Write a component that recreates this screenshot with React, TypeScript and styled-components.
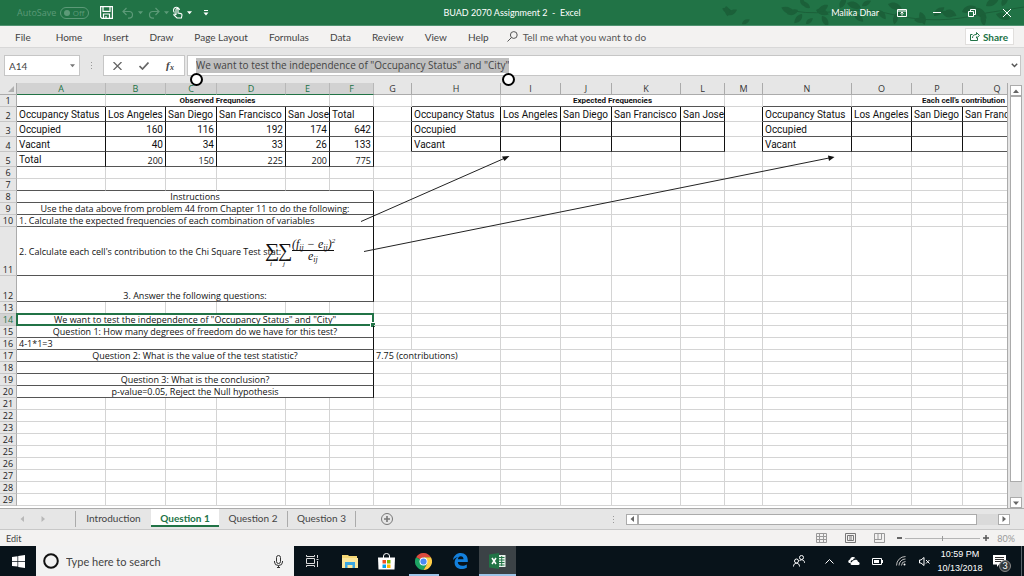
import React from "react";
import styled, { createGlobalStyle, css } from "styled-components";

const green = "#217346";
const ui = `Lato, "Open Sans", sans-serif`;
const headFont = `"Open Sans", "Noto Sans", sans-serif`;
const tableFont = `Roboto, "Open Sans", sans-serif`;

const GlobalStyle = createGlobalStyle`
  *, *::before, *::after { box-sizing: border-box; }
  body { margin: 0; font-family: ${ui}; color: #444; }
  button, input { font: inherit; color: inherit; margin: 0; padding: 0; border: 0; background: none; }
  svg { display: block; flex: none; }
`;

const Window = styled.div`
  display: flex;
  flex-direction: column;
  height: 100vh;
  overflow: hidden;
  background: #e6e6e6;
`;

/* ---------- title bar ---------- */

const TitleBar = styled.header`
  position: relative;
  display: grid;
  grid-template-columns: 1fr auto 1fr;
  align-items: center;
  height: 26px;
  flex: none;
  background: ${green};
  border-bottom: 1px solid #4f9270;
  color: #fff;
  font-size: 9px;
`;

const Foliage = styled.svg`
  position: absolute;
  top: 0;
  right: 0;
`;

const QuickAccess = styled.div`
  display: flex;
  align-items: center;
  padding-left: 17px;
`;

const AutoSave = styled.label`
  display: flex;
  align-items: center;
  gap: 4px;
  width: 83px;
  color: #5c9a78;
  font-family: ${headFont};
  font-size: 9px;
`;

const Toggle = styled.button`
  display: flex;
  align-items: center;
  justify-content: space-between;
  width: 29px;
  height: 12px;
  padding: 0 4px 0 3px;
  border: 1px solid #5c9a78;
  border-radius: 6px;
  color: #5c9a78;
  font-size: 8px;
  line-height: 9px;
  &::before {
    content: "";
    width: 6px;
    height: 6px;
    border-radius: 50%;
    background: #5c9a78;
  }
`;

const QuickButton = styled.button<{ $w: number; $dim?: boolean }>`
  display: flex;
  align-items: center;
  gap: 4px;
  width: ${(p) => p.$w}px;
  height: 20px;
  color: ${(p) => (p.$dim ? "#5c9a78" : "#fff")};
`;

const DocTitle = styled.h1`
  margin: 0;
  font-size: 9px;
  font-weight: 400;
  white-space: pre;
`;

const WindowControls = styled.div`
  position: relative;
  display: flex;
  align-items: center;
  justify-content: flex-end;
`;

const UserName = styled.span`
  margin-right: 5px;
`;

const WindowButton = styled.button`
  display: grid;
  place-items: center;
  width: 35px;
  height: 24px;
`;

/* ---------- ribbon ---------- */

const Ribbon = styled.nav`
  display: flex;
  align-items: center;
  height: 22px;
  flex: none;
  padding: 0 10px 0 5px;
  background: #f3f2f1;
  border-bottom: 1px solid #d8d8d8;
  font-size: 10px;
`;

const RibbonTab = styled.button<{ $first?: boolean }>`
  height: 22px;
  padding: 0 10px;
  margin-right: ${(p) => (p.$first ? 5 : 1)}px;
  white-space: nowrap;
`;

const TellMe = styled.button`
  display: flex;
  align-items: center;
  gap: 5px;
  margin-left: 7px;
  color: #555;
`;

const ShareButton = styled.button`
  display: flex;
  align-items: center;
  gap: 3px;
  height: 17px;
  margin-left: auto;
  padding: 0 5px 0 4px;
  background: #fff;
  border: 1px solid #e1dfdd;
  color: ${green};
  font-weight: 700;
`;

/* ---------- formula bar ---------- */

const FormulaBar = styled.div`
  position: relative;
  display: flex;
  align-items: center;
  height: 35px;
  flex: none;
  padding: 0 3px 0 4px;
`;

const barBox = css`
  height: 21px;
  background: #fff;
  border: 1px solid #c6c6c6;
`;

const NameBox = styled.div`
  ${barBox}
  display: flex;
  align-items: center;
  width: 76px;
  padding: 0 4px;
  & > input { width: 56px; font-size: 10px; flex: 1; }
`;

const Grip = styled.div`
  width: 23px;
  display: grid;
  place-items: center;
`;

const FormulaButtons = styled.div`
  ${barBox}
  display: flex;
  width: 82px;
  margin-right: 2px;
  & > button { flex: 1; display: grid; place-items: center; }
`;

const FormulaField = styled.div`
  ${barBox}
  display: flex;
  flex: 1;
  align-items: center;
  justify-content: space-between;
  padding: 0 2px 0 8px;
`;

const Selection = styled.div`
  position: relative;
  display: flex;
`;

const FormulaInput = styled.input`
  field-sizing: content;
  height: 15px;
  min-width: 60px;
  background: #c0c0c0;
  color: #444;
  font-family: ${headFont};
  font-size: 10px;
  line-height: 15px;
`;

const Handle = styled.span<{ $end?: boolean }>`
  position: absolute;
  top: 15px;
  ${(p) => (p.$end ? "right: -6px;" : "left: -6px;")}
  width: 13px;
  height: 13px;
  border: 2px solid #000;
  border-radius: 50%;
  background: #fff;
  z-index: 3;
`;

/* ---------- sheet ---------- */

const SheetArea = styled.main`
  display: flex;
  flex: 1;
  min-height: 0;
`;

const Grid = styled.div`
  position: relative;
  flex: 1;
  min-width: 0;
  overflow: hidden;
  background: #fff;
  border-right: 1px solid #ababab;
`;

const Table = styled.table`
  width: 100%;
  table-layout: fixed;
  border-spacing: 0;
  font-family: ${headFont};
  color: #111;
`;

const ColHead = styled.th<{ $on?: boolean }>`
  height: 12px;
  padding: 0;
  background: ${(p) => (p.$on ? "#d2d2d2" : "#e6e6e6")};
  border-right: 1px solid ${(p) => (p.$on ? "#b8b8b8" : "#ababab")};
  border-bottom: 1px solid ${(p) => (p.$on ? green : "#ababab")};
  color: ${(p) => (p.$on ? green : "#333")};
  font: 400 9px/11px ${headFont};
`;

const Corner = styled(ColHead)`
  & > svg { margin-left: 8px; }
`;

const RowHead = styled.th<{ $on?: boolean }>`
  padding: 0;
  vertical-align: bottom;
  background: ${(p) => (p.$on ? "#d2d2d2" : "#e6e6e6")};
  border-right: 1px solid #ababab;
  border-bottom: 1px solid #c6c6c6;
  color: ${(p) => (p.$on ? green : "#222")};
  font: 400 9px/11px ${headFont};
`;

type CellStyle = {
  $box?: boolean;
  $under?: boolean;
  $edge?: boolean;
  $align?: "left" | "right" | "center";
  $big?: boolean;
  $bold?: boolean;
  $middle?: boolean;
  $active?: boolean;
};

const Cell = styled.td<CellStyle>`
  position: relative;
  padding: 0 2px;
  white-space: nowrap;
  vertical-align: ${(p) => (p.$middle ? "middle" : "bottom")};
  border-right: 1px solid ${(p) => (p.$box || p.$edge ? "#111" : "#d4d4d4")};
  border-bottom: 1px solid ${(p) => (p.$box || p.$under ? "#555" : "#d4d4d4")};
  text-align: ${(p) => p.$align ?? "left"};
  font-family: ${(p) => (p.$big || p.$bold ? tableFont : "inherit")};
  font-size: ${(p) => (p.$bold ? 8 : p.$big ? 10 : 9)}px;
  line-height: ${(p) => (p.$big ? 12 : 11)}px;
  font-weight: ${(p) => (p.$bold ? 700 : 400)};
  ${(p) =>
    p.$active &&
    css`
      &::before {
        content: "";
        position: absolute;
        inset: -1px;
        border: 2px solid ${green};
      }
      &::after {
        content: "";
        position: absolute;
        right: -2px;
        bottom: -2px;
        width: 4px;
        height: 4px;
        background: ${green};
        outline: 1px solid #fff;
      }
    `}
`;

const Drawings = styled.svg`
  position: absolute;
  top: 0;
  left: 0;
  pointer-events: none;
`;

const VScroll = styled.div`
  display: flex;
  flex-direction: column;
  align-items: center;
  width: 16px;
  padding-top: 2px;
`;

const scrollBox = css`
  background: #fff;
  border: 1px solid #ababab;
`;

const ScrollButton = styled.button`
  ${scrollBox}
  display: grid;
  place-items: center;
  width: 12px;
  height: 11px;
  flex: none;
`;

const VThumb = styled.div`
  ${scrollBox}
  width: 12px;
  flex: 1;
`;

const VTrack = styled.div`
  width: 12px;
  height: 15px;
  flex: none;
  background: #dadada;
`;

/* ---------- sheet tabs & status ---------- */

const TabStrip = styled.div`
  display: flex;
  height: 22px;
  flex: none;
  border-top: 1px solid #ababab;
  border-bottom: 1px solid #c8c8c8;
  font-size: 10px;
`;

const TabArrows = styled.div`
  display: flex;
  align-items: center;
  gap: 15px;
  width: 75px;
  padding-left: 19px;
`;

const SheetTab = styled.button<{ $active?: boolean; $w: number }>`
  width: ${(p) => p.$w}px;
  height: 18px;
  white-space: nowrap;
  ${(p) =>
    p.$active &&
    css`
      background: #fff;
      color: ${green};
      font-weight: 700;
      border-bottom: 2px solid ${green};
      padding-top: 2px;
    `}
`;

const TabDivider = styled.span`
  width: 1px;
  height: 16px;
  margin-top: 2px;
  background: #ababab;
`;

const AddSheet = styled.button`
  display: grid;
  place-items: center;
  width: 62px;
  height: 20px;
`;

const HScroll = styled.div`
  display: flex;
  align-items: center;
  width: 41%;
  margin-left: auto;
  padding-right: 14px;
  height: 20px;
`;

const HGrip = styled(Grip)`
  width: 20px;
  margin-right: 2px;
  flex: none;
`;

const HThumb = styled.div`
  ${scrollBox}
  flex: 1;
  height: 11px;
`;

const HTrack = styled.div`
  width: 21px;
  height: 11px;
  background: #dadada;
`;

const StatusBar = styled.footer`
  display: flex;
  align-items: center;
  height: 16px;
  flex: none;
  padding: 0 9px 0 6px;
  background: #f3f2f1;
  font-size: 9px;
`;

const ViewButtons = styled.div`
  display: flex;
  gap: 18px;
  margin-left: auto;
  margin-right: 12px;
`;

const Zoom = styled.div`
  display: flex;
  align-items: center;
  gap: 3px;
  color: #999;
`;

const ZoomRange = styled.input`
  appearance: none;
  width: 75px;
  height: 7px;
  background: linear-gradient(#b5b5b5, #b5b5b5) center / 100% 1px no-repeat;
  &::-webkit-slider-thumb {
    appearance: none;
    width: 1px;
    height: 5px;
    background: #999;
  }
`;

const ZoomValue = styled.span`
  margin-left: 5px;
`;

/* ---------- taskbar ---------- */

const Taskbar = styled.div`
  display: flex;
  height: 30px;
  flex: none;
  background: #08131a;
  color: #fff;
`;

const TaskButton = styled.button<{ $active?: boolean; $open?: boolean }>`
  display: grid;
  place-items: center;
  width: 37px;
  height: 30px;
  background: ${(p) => (p.$active ? "#3b4246" : "transparent")};
  ${(p) => p.$active && "border-bottom: 2px solid #9cc4e8; padding-top: 2px;"}
  ${(p) =>
    p.$open &&
    "background: linear-gradient(#9cc4e8, #9cc4e8) center bottom / 30px 2px no-repeat;"}
`;

const StartButton = styled(TaskButton)`
  width: 36px;
`;

const SearchBox = styled.label`
  display: flex;
  align-items: center;
  width: 258px;
  padding: 0 11px 0 7px;
  background: #f2f2f2;
  color: #444;
  & > input { flex: 1; min-width: 0; margin-left: 7px; font-size: 11px; }
  & > input::placeholder { color: #444; opacity: 1; }
`;

const Tray = styled.div`
  display: flex;
  align-items: center;
  margin-left: auto;
`;

const TrayButton = styled.button<{ $w?: number }>`
  display: grid;
  place-items: center;
  width: ${(p) => p.$w ?? 24}px;
  height: 30px;
`;

const Clock = styled.button`
  width: 50px;
  font-family: "Liberation Sans", sans-serif;
  font-size: 9px;
  line-height: 14px;
  text-align: center;
`;

const Notifications = styled.button`
  position: relative;
  width: 36px;
  height: 30px;
  padding-left: 8px;
`;

const Badge = styled.span`
  position: absolute;
  left: 14px;
  top: 14px;
  width: 12px;
  height: 12px;
  border: 1px solid #888;
  border-radius: 50%;
  background: #333a3e;
  font-size: 9px;
  line-height: 10px;
  text-align: center;
`;

const DesktopEdge = styled.div`
  width: 3px;
  height: 30px;
  border-left: 1px solid #59636a;
`;

/* ---------- small drawings ---------- */

const Caret = ({ size = 5, color = "currentColor" }: { size?: number; color?: string }) => (
  <svg width={size} height="4" viewBox="0 0 6 4">
    <path d="M0 0h6L3 3.6z" fill={color} />
  </svg>
);

const Arrow = ({ dir, color = "#666" }: { dir: "up" | "down" | "left" | "right"; color?: string }) => {
  const d = {
    up: "M0 5h6L3 1.5z",
    down: "M0 1.5h6L3 5z",
    left: "M5 0v6L1.5 3z",
    right: "M1.5 0v6L5 3z",
  }[dir];
  return (
    <svg width="6" height="6" viewBox="0 0 6 6">
      <path d={d} fill={color} />
    </svg>
  );
};

const Dots = () => (
  <svg width="2" height="9" viewBox="0 0 2 9" fill="#999">
    <path d="M0 1h1v1H0zM0 4h1v1H0zM0 7h1v1H0z" />
  </svg>
);

const UndoIcon = ({ flip }: { flip?: boolean }) => (
  <svg width="12" height="12" viewBox="0 0 12 12" fill="none" stroke="currentColor" strokeWidth="1.2">
    <g transform={flip ? "matrix(-1 0 0 1 12 0)" : undefined}>
      <path d="M4.5 1 1 4.5 4.5 8M1 4.5h6.2a3.3 3.3 0 0 1 0 6.6H6" />
    </g>
  </svg>
);

const Leaf = ({ x, y, r, s = 1 }: { x: number; y: number; r: number; s?: number }) => (
  <path d="M0 0C4 -5 10 -5 15 0C10 4 4 4 0 0z" transform={`translate(${x} ${y}) rotate(${r}) scale(${s})`} />
);

const leaves: [number, number, number, number][] = [
  [112, 12, 200, 0.9], [116, 10, 160, 0.8], [120, 14, 130, 0.8], [128, 8, 220, 0.7], [122, 6, 250, 0.6],
  [134, 10, 20, 0.9], [140, 16, 60, 0.8], [146, 5, 150, 0.8], [150, 12, 10, 0.9], [158, 8, 300, 0.8],
  [165, 3, 20, 1], [172, 14, 40, 0.8], [180, 6, 330, 0.7], [196, 10, 50, 0.8], [206, 4, 20, 1],
  [214, 14, 100, 0.7], [222, 12, 160, 0.7], [238, 12, 70, 0.9], [244, 20, 180, 0.8], [252, 16, 320, 0.9],
  [264, 10, 30, 0.8], [272, 16, 200, 0.9], [280, 12, 340, 1], [292, 8, 40, 1.1], [300, 14, 80, 0.8],
  [304, 6, 330, 1], [314, 14, 20, 1], [320, 6, 300, 0.8], [50, 12, 200, 0.7], [46, 15, 330, 0.7],
  [44, 6, 80, 0.7], [60, 24, 330, 0.6], [124, 24, 320, 0.6],
];

/* ---------- sheet data ---------- */

const columns: [string, number][] = [
  ["A", 89], ["B", 60], ["C", 51], ["D", 69], ["E", 44], ["F", 44], ["G", 38],
  ["H", 89], ["I", 60], ["J", 51], ["K", 69], ["L", 44], ["M", 38],
  ["N", 89], ["O", 60], ["P", 51], ["Q", 69], ["", 44],
];

type CellData = { t?: string; span?: number } & CellStyle;
type RowData = { h: number; cells: CellData[] };

const blank = (n: number, style: CellStyle = {}): CellData[] =>
  Array.from({ length: n }, () => ({ ...style }));

const big = (t: string): CellData => ({ t, $big: true, $box: true });
const num = (t: string): CellData => ({ t, $big: true, $box: true, $align: "right" });
const note = (t: string, style: CellStyle = {}): CellData => ({
  t, span: 6, $box: true, $align: "center", ...style,
});
const heading = (t: string): CellData => ({
  t, span: 4, $bold: true, $align: "center", $under: true,
});

const cities = ["Los Angeles", "San Diego", "San Francisco", "San Jose"];
const emptyTable = (label: string, n: number): CellData[] => [
  big(label),
  ...blank(n, { $box: true }),
];

const rows: RowData[] = [
  {
    h: 12,
    cells: [
      { $under: true },
      heading("Observed Frequncies"),
      { $under: true }, {},
      { $under: true },
      heading("Expected Frequencies"),
      {}, { $under: true },
      heading("Each cell's contribution"),
    ],
  },
  {
    h: 15,
    cells: [
      big("Occupancy Status"), ...cities.map(big), big("Total"), { $edge: true },
      big("Occupancy Status"), ...cities.map(big), { $edge: true },
      big("Occupancy Status"), ...cities.slice(0, 3).map(big), { $box: true },
    ],
  },
  {
    h: 15,
    cells: [
      big("Occupied"), ...["160", "116", "192", "174", "642"].map(num), { $edge: true },
      ...emptyTable("Occupied", 4), { $edge: true }, ...emptyTable("Occupied", 4),
    ],
  },
  {
    h: 15,
    cells: [
      big("Vacant"), ...["40", "34", "33", "26", "133"].map(num), { $edge: true },
      ...emptyTable("Vacant", 4), { $edge: true }, ...emptyTable("Vacant", 4),
    ],
  },
  {
    h: 15,
    cells: [
      big("Total"),
      ...["200", "150", "225", "200", "775"].map((t): CellData => ({ ...num(t), $big: false })),
      ...blank(12),
    ],
  },
  { h: 12, cells: blank(18) },
  { h: 12, cells: [...blank(6, { $under: true }), ...blank(12)] },
  { h: 12, cells: [note("Instructions"), ...blank(12)] },
  {
    h: 12,
    cells: [note("Use the data above from problem 44 from Chapter 11 to do the following:"), ...blank(12)],
  },
  {
    h: 12,
    cells: [
      note("1. Calculate the expected frequencies of each combination of variables", { $align: "left" }),
      ...blank(12),
    ],
  },
  {
    h: 49,
    cells: [
      note("2. Calculate each cell's contribution to the Chi Square Test stat:", {
        $align: "left",
        $middle: true,
      }),
      ...blank(12),
    ],
  },
  { h: 26, cells: [note("3. Answer the following questions:"), ...blank(12)] },
  { h: 12, cells: blank(18) },
  {
    h: 12,
    cells: [
      note(`We want to test the independence of "Occupancy Status" and "City"`, { $active: true }),
      ...blank(12),
    ],
  },
  { h: 12, cells: [note("Question 1: How many degrees of freedom do we have for this test?"), ...blank(12)] },
  { h: 12, cells: [note("4-1*1=3", { $align: "left" }), ...blank(12)] },
  {
    h: 12,
    cells: [
      note("Question 2: What is the value of the test statistic?"),
      { t: "7.75 (contributions)", span: 2 },
      ...blank(10),
    ],
  },
  { h: 12, cells: [note(""), ...blank(12)] },
  { h: 12, cells: [note("Question 3: What is the conclusion?"), ...blank(12)] },
  { h: 12, cells: [note("p-value=0.05, Reject the Null hypothesis"), ...blank(12)] },
  ...Array.from({ length: 9 }, () => ({ h: 12, cells: blank(18) })),
];

const SheetTable = () => (
  <Table>
    <colgroup>
      <col style={{ width: 17 }} />
      {columns.map(([name, w], i) => (
        <col key={name + i} style={{ width: w }} />
      ))}
      <col />
    </colgroup>
    <thead>
      <tr>
        <Corner>
          <svg width="6" height="6" viewBox="0 0 6 6">
            <path d="M6 0v6H0z" fill="#b0b0b0" />
          </svg>
        </Corner>
        {columns.map(([name], i) => (
          <ColHead key={name + i} $on={i < 6}>
            {name}
          </ColHead>
        ))}
        <ColHead />
      </tr>
    </thead>
    <tbody>
      {rows.map((row, r) => (
        <tr key={r} style={{ height: row.h }}>
          <RowHead $on={r === 13}>{r + 1}</RowHead>
          {row.cells.map(({ t, span, ...style }, c) => (
            <Cell key={c} colSpan={span} {...style}>
              {t}
            </Cell>
          ))}
          <Cell />
        </tr>
      ))}
    </tbody>
  </Table>
);

const SheetDrawings = () => (
  <Drawings width="1007" height="424" viewBox="0 83 1007 424">
    <g stroke="#222" strokeWidth="1" fill="#111">
      <path d="M361 221.500 504 158.500M364 251.500 829 158" fill="none" />
      <path d="M509.500 156 502 156.500 504.500 161z" stroke="none" />
      <path d="M834.500 157 828 155.500 829 161z" stroke="none" />
    </g>
    <g fill="#111" fontFamily="'Liberation Serif', serif" fontStyle="italic">
      <g fontSize="20" fontStyle="normal" fontFamily="'Liberation Serif', serif">
        <text x="265" y="257">∑</text>
        <text x="278" y="257">∑</text>
      </g>
      <text x="270" y="266" fontSize="7">i</text>
      <text x="283" y="266" fontSize="7">j</text>
      <text x="292" y="248" fontSize="12">
        (f<tspan fontSize="8" dy="2">ij</tspan>
        <tspan dy="-2"> − e</tspan>
        <tspan fontSize="8" dy="2">ij</tspan>
        <tspan dy="-2">)</tspan>
        <tspan fontSize="7" dy="-5">2</tspan>
      </text>
      <path d="M292 250.500h42" stroke="#111" />
      <text x="308" y="260" fontSize="12">
        e<tspan fontSize="8" dy="2">ij</tspan>
      </text>
    </g>
  </Drawings>
);

const App = () => (
  <Window>
    <GlobalStyle />
    <TitleBar>
      <Foliage width="342" height="25" viewBox="0 0 342 25" fill="#1b6039">
        <path d="M112 11c30 6 60-6 92 2s60 10 100 0l38-6" fill="none" stroke="#1b6039" />
        {leaves.map(([x, y, r, s], i) => (
          <Leaf key={i} x={x} y={y} r={r} s={s} />
        ))}
      </Foliage>
      <QuickAccess>
        <AutoSave>
          AutoSave <Toggle>Off</Toggle>
        </AutoSave>
        <QuickButton $w={22} aria-label="Save">
          <svg width="13" height="13" viewBox="0 0 13 13" fill="none" stroke="currentColor" strokeWidth="1.2">
            <path d="M.6.6h11.800v11.800H2L.6 11zM3 .6v4.800h7V.6M3.500 12.400V8h6v4.400M6 10v2" />
          </svg>
        </QuickButton>
        <QuickButton $w={26} $dim aria-label="Undo">
          <UndoIcon />
          <Caret />
        </QuickButton>
        <QuickButton $w={24} $dim aria-label="Redo">
          <UndoIcon flip />
          <Caret />
        </QuickButton>
        <QuickButton $w={31} aria-label="Touch mode">
          <svg width="11" height="13" viewBox="0 0 11 13" fill="none" stroke="currentColor" strokeWidth="1.1">
            <path d="M2.500 6.500a3 3 0 1 1 5-2.500M4 9V3.500a1 1 0 0 1 2 0V7l3 .6c.8.200 1 .800 1 1.400L9.400 12H5L2 9.200c-.6-.8.400-1.600 1.200-1L4 9" />
          </svg>
          <Caret />
        </QuickButton>
        <QuickButton $w={10} aria-label="Customize quick access">
          <svg width="6" height="6" viewBox="0 0 6 6" fill="currentColor">
            <path d="M1 0h4v1H1zM.5 2.500h5L3 5.500z" />
          </svg>
        </QuickButton>
      </QuickAccess>
      <DocTitle>BUAD 2070 Assignment 2  -  Excel</DocTitle>
      <WindowControls>
        <UserName>Malika Dhar</UserName>
        <WindowButton aria-label="Ribbon display options">
          <svg width="10" height="8" viewBox="0 0 10 8" fill="none" stroke="#fff">
            <path d="M.5.5h9v7h-9zM.5 2h9M5 6.500V3M3.500 4.500 5 3l1.500 1.500" />
          </svg>
        </WindowButton>
        <WindowButton aria-label="Minimize">
          <svg width="8" height="1"><path d="M0 0h8v1H0z" fill="#fff" /></svg>
        </WindowButton>
        <WindowButton aria-label="Restore">
          <svg width="8" height="8" viewBox="0 0 8 8" fill="none" stroke="#fff">
            <path d="M.5 2.500h5v5h-5zM2.500 2.500v-2h5v5h-2" />
          </svg>
        </WindowButton>
        <WindowButton aria-label="Close">
          <svg width="8" height="8" viewBox="0 0 8 8" stroke="#fff"><path d="m0 0 8 8M8 0 0 8" /></svg>
        </WindowButton>
      </WindowControls>
    </TitleBar>

    <Ribbon>
      {["File", "Home", "Insert", "Draw", "Page Layout", "Formulas", "Data", "Review", "View", "Help"].map(
        (name, i) => (
          <RibbonTab key={name} $first={i === 0}>
            {name}
          </RibbonTab>
        ),
      )}
      <TellMe>
        <svg width="11" height="11" viewBox="0 0 11 11" fill="none" stroke="#555">
          <circle cx="6.800" cy="4" r="3.400" />
          <path d="M4.500 6.500.5 10.500" />
        </svg>
        Tell me what you want to do
      </TellMe>
      <ShareButton>
        <svg width="10" height="9" viewBox="0 0 10 9" fill="none" stroke={green}>
          <path d="M2.500 2.500h-2v6h7V6M2.500 6c0-2.500 1.500-3.500 4-3.500V.5L9.500 3.500l-3 2.500V4.500" />
        </svg>
        Share
      </ShareButton>
    </Ribbon>

    <FormulaBar>
      <NameBox>
        <input aria-label="Name box" defaultValue="A14" />
        <Caret color="#777" />
      </NameBox>
      <Grip><Dots /></Grip>
      <FormulaButtons>
        <button aria-label="Cancel">
          <svg width="9" height="8" viewBox="0 0 9 8" stroke="#666" strokeWidth="1.300"><path d="m.5 0 8 8M8.500 0l-8 8" /></svg>
        </button>
        <button aria-label="Enter">
          <svg width="10" height="8" viewBox="0 0 10 8" fill="none" stroke="#666" strokeWidth="1.700"><path d="m.5 4 3 3 6-6.500" /></svg>
        </button>
        <button aria-label="Insert function">
          <svg width="11" height="11" viewBox="0 0 11 11" fill="#444" fontFamily="Liberation Serif, serif" fontStyle="italic" fontWeight="700">
            <text x="1" y="9" fontSize="11">f</text>
            <text x="5" y="10" fontSize="8">x</text>
          </svg>
        </button>
      </FormulaButtons>
      <FormulaField>
        <Selection>
          <FormulaInput
            aria-label="Formula"
            defaultValue={`We want to test the independence of "Occupancy Status" and "City"`}
          />
          <Handle />
          <Handle $end />
        </Selection>
        <svg width="7" height="5" viewBox="0 0 7 5" fill="none" stroke="#555" strokeWidth="1.500"><path d="m.8.8 2.700 2.700L6.200.8" /></svg>
      </FormulaField>
    </FormulaBar>

    <SheetArea>
      <Grid>
        <SheetTable />
        <SheetDrawings />
      </Grid>
      <VScroll>
        <ScrollButton aria-label="Scroll up"><Arrow dir="up" /></ScrollButton>
        <VThumb />
        <VTrack />
        <ScrollButton aria-label="Scroll down"><Arrow dir="down" /></ScrollButton>
      </VScroll>
    </SheetArea>

    <TabStrip>
      <TabArrows>
        <Arrow dir="left" color="#b8b8b8" />
        <Arrow dir="right" color="#b8b8b8" />
      </TabArrows>
      <TabDivider />
      <SheetTab $w={75}>Introduction</SheetTab>
      <SheetTab $w={68} $active>Question 1</SheetTab>
      <SheetTab $w={68}>Question 2</SheetTab>
      <TabDivider />
      <SheetTab $w={67}>Question 3</SheetTab>
      <TabDivider />
      <AddSheet aria-label="New sheet">
        <svg width="12" height="12" viewBox="0 0 12 12" fill="none" stroke="#777">
          <circle cx="6" cy="6" r="5.500" />
          <path d="M3 6h6M6 3v6" strokeWidth="1.600" />
        </svg>
      </AddSheet>
      <HScroll>
        <HGrip><Dots /></HGrip>
        <ScrollButton aria-label="Scroll left"><Arrow dir="left" /></ScrollButton>
        <HThumb />
        <HTrack />
        <ScrollButton aria-label="Scroll right"><Arrow dir="right" /></ScrollButton>
      </HScroll>
    </TabStrip>

    <StatusBar>
      Edit
      <ViewButtons>
        <svg width="11" height="10" viewBox="0 0 11 10" fill="none" stroke="#999">
          <path d="M.5.5h10v9H.5zM.5 3.500h10M.5 6.500h10M3.500.5v9M7.500.5v9" />
        </svg>
        <svg width="11" height="10" viewBox="0 0 11 10" fill="none" stroke="#777">
          <path d="M.5.5h10v9H.5zM2.500 2.500h6v5h-6zM4 4h3M4 6h3" />
        </svg>
        <svg width="11" height="10" viewBox="0 0 11 10" fill="none" stroke="#999">
          <path d="M.5.5h10v9H.5zM.5 6.500h7v-6M4 .5v6" />
        </svg>
      </ViewButtons>
      <Zoom>
        <svg width="5" height="2"><path d="M0 0h5v2H0z" fill="#666" /></svg>
        <ZoomRange type="range" aria-label="Zoom" defaultValue={50} />
        <svg width="6" height="6" viewBox="0 0 6 6" stroke="#555" strokeWidth="1.500"><path d="M0 3h6M3 0v6" /></svg>
        <ZoomValue>80%</ZoomValue>
      </Zoom>
    </StatusBar>

    <Taskbar>
      <StartButton aria-label="Start">
        <svg width="13" height="13" viewBox="0 0 13 13" fill="#fff">
          <path d="M0 2 5.500 1.200V6H0zM6.200 1.100 13 0v6H6.200zM0 6.800h5.500v4.800L0 10.900zM6.200 6.800H13V13l-6.800-1.100z" />
        </svg>
      </StartButton>
      <SearchBox>
        <svg width="16" height="16" viewBox="0 0 16 16" fill="none" stroke="#111" strokeWidth="2"><circle cx="8" cy="8" r="6.800" /></svg>
        <input aria-label="Search" placeholder="Type here to search" />
        <svg width="9" height="13" viewBox="0 0 9 13" fill="none" stroke="#333">
          <path d="M2.500 2.500a2 2 0 0 1 4 0v4a2 2 0 0 1-4 0zM.5 6v1a4 3.500 0 0 0 8 0V6M4.500 10.500v2M3 12.500h3" />
        </svg>
      </SearchBox>
      <TaskButton aria-label="Task view">
        <svg width="13" height="12" viewBox="0 0 13 12" fill="none" stroke="#ddd">
          <path d="M.5 0v1.500h8V0M.5 3.500h8v5h-8zM.5 12v-1.500h8V12M11.500 0v3M11.500 6v6M10.500 4.500h2" />
        </svg>
      </TaskButton>
      <TaskButton aria-label="File Explorer">
        <svg width="16" height="15" viewBox="0 0 16 15">
          <path d="M0 1h6l1 1h8v12H0z" fill="#f5d775" />
          <path d="M0 4h16v10H0z" fill="#fbe69b" />
          <path d="M3 8h10v6h-2.500v-3h-5v3H3z" fill="#3aa6e0" />
        </svg>
      </TaskButton>
      <TaskButton aria-label="Store">
        <svg width="17" height="17" viewBox="0 0 17 17">
          <path d="M5.500 5V3a3 2.500 0 0 1 6 0v2" fill="none" stroke="#fff" />
          <path d="M0 4.500h17l-.5 12H.5z" fill="#fff" />
          <path d="M4.500 7H8v3.500H4.500z" fill="#f25022" />
          <path d="M9 7h3.500v3.500H9z" fill="#7fba00" />
          <path d="M4.500 11.500H8V15H4.500z" fill="#00a4ef" />
          <path d="M9 11.500h3.500V15H9z" fill="#ffb900" />
        </svg>
      </TaskButton>
      <TaskButton aria-label="Chrome" $open>
        <svg width="17" height="17" viewBox="0 0 18 18">
          <path d="M9 9 1.200 4.500A9 9 0 0 1 16.800 4.500H9z" fill="#dd4b3e" />
          <path d="M9 9 1.200 4.500A9 9 0 0 0 9 18l3.900-6.750z" fill="#1da362" />
          <path d="M16.800 4.500A9 9 0 0 1 9 18l3.900-6.750L9 4.500z" fill="#ffcd46" />
          <circle cx="9" cy="9" r="4.200" fill="#fff" />
          <circle cx="9" cy="9" r="3.300" fill="#4a8af4" />
        </svg>
      </TaskButton>
      <TaskButton aria-label="Edge">
        <svg width="15" height="16" viewBox="0 0 15 16">
          <path
            d="M0 7C.6 2.700 3.700 0 7.700 0 12 0 14.800 3 14.800 7.300V9H4.800c.1 2.500 2 3.800 4.500 3.800 1.700 0 3.200-.5 4.500-1.300v3.200c-1.500.9-3.300 1.300-5.200 1.300-4.300 0-7-2.600-7-6.500 0-2.600 1.400-4.700 3.700-5.800C3.200 4.200 1.200 5.400 0 7zM4.900 6.300h5.600c0-1.900-1-3-2.700-3-1.600 0-2.700 1.200-2.900 3z"
            fill="#1380dc"
          />
        </svg>
      </TaskButton>
      <TaskButton aria-label="Excel" $active>
        <svg width="17" height="16" viewBox="0 0 17 16">
          <path d="M8 2h8.500v12H8z" fill="#e9f3ed" />
          <path d="M10 4.500h5.500M10 7h5.500M10 9.500h5.500M10 12h5.500M12.700 3v10" stroke={green} />
          <path d="M0 1.500 10 0v16L0 14.500z" fill={green} />
          <path d="m3 5 4 6M7 5l-4 6" stroke="#fff" strokeWidth="1.500" />
        </svg>
      </TaskButton>
      <Tray>
        <TrayButton $w={37} aria-label="People">
          <svg width="12" height="12" viewBox="0 0 12 12" fill="none" stroke="#fff">
            <circle cx="8.500" cy="2.500" r="2" />
            <circle cx="3.500" cy="6" r="2" />
            <path d="M.5 11.500c0-2 1-3.200 3-3.200s3 1.200 3 3.200M6.500 6c.5-.8 1.200-1.200 2-1.200 2 0 3 1.200 3 3" />
          </svg>
        </TrayButton>
        <TrayButton aria-label="Show hidden icons">
          <svg width="9" height="5" viewBox="0 0 9 5" fill="none" stroke="#fff"><path d="m.5 4.500 4-4 4 4" /></svg>
        </TrayButton>
        <TrayButton aria-label="OneDrive">
          <svg width="13" height="8" viewBox="0 0 13 8" fill="#fff">
            <path d="M2 6a2 2 0 0 1 1-3.500A3 3 0 0 1 8.500 1.500a2 2 0 0 0-2.500 1.500A2 2 0 0 0 4 6z" />
            <path d="M5 8a1.500 1.500 0 0 1 0-3 2 2 0 0 1 2-1.800 2.500 2.500 0 0 1 4 1.500A1.700 1.700 0 0 1 11.500 8z" />
          </svg>
        </TrayButton>
        <TrayButton aria-label="Battery">
          <svg width="11" height="7" viewBox="0 0 11 7"><path d="M.5.5h9v6h-9z" fill="none" stroke="#fff" /><path d="M2 2h5v3H2zM10 2h1v3h-1z" fill="#fff" /></svg>
        </TrayButton>
        <TrayButton aria-label="Network">
          <svg width="10" height="10" viewBox="0 0 10 10" fill="none" stroke="#bbb">
            <path d="M.5 9.500a9 9 0 0 1 9-9M3 9.500A6.500 6.500 0 0 1 9.500 3M5.500 9.500a4 4 0 0 1 4-4" />
            <circle cx="8.500" cy="8.500" r="1" fill="#fff" stroke="none" />
          </svg>
        </TrayButton>
        <TrayButton $w={22} aria-label="Volume muted">
          <svg width="11" height="9" viewBox="0 0 11 9" fill="none" stroke="#fff">
            <path d="M.5 3v3h1.500l3 2.500v-8L2 3zM7 3l3.500 3.500M10.500 3 7 6.500" />
          </svg>
        </TrayButton>
        <Clock>10:59 PM<br />10/13/2018</Clock>
        <Notifications aria-label="Action center">
          <svg width="13" height="12" viewBox="0 0 13 12"><path d="M0 0h13v9.500H6L4 12V9.500H0z" fill="#fff" /><path d="M2 2.500h9M2 4.500h9M2 6.500h6" stroke="#333" /></svg>
          <Badge>3</Badge>
        </Notifications>
        <DesktopEdge />
      </Tray>
    </Taskbar>
  </Window>
);

export default App;
